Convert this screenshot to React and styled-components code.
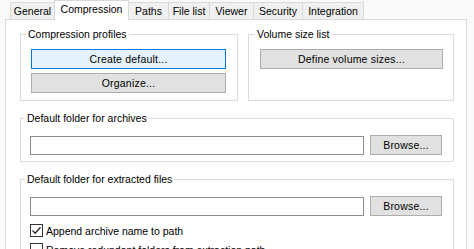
import React from "react";
import styled, { createGlobalStyle } from "styled-components";

const GlobalStyle = createGlobalStyle`
  body {
    margin: 0;
    background: #fafafa;
  }
`;

const Window = styled.div`
  width: 474px;
  height: 249px;
  padding-left: 5px;
  box-sizing: border-box;
  overflow: hidden;
  display: flex;
  flex-direction: column;
  font-family: "Liberation Sans", Arial, sans-serif;
  font-size: 10.5px;
  color: #000;
  background: #fafafa;
`;

const TabStrip = styled.div`
  display: flex;
  align-items: flex-start;
  height: 20px;
  padding-left: 5px;
`;

const Tab = styled.div`
  position: relative;
  z-index: ${(p) => (p.$active ? 2 : 1)};
  box-sizing: border-box;
  width: ${(p) => p.$w}px;
  height: ${(p) => (p.$active ? 20 : 18)}px;
  margin-top: ${(p) => (p.$active ? 0 : 2)}px;
  margin-left: ${(p) => (p.$first ? 0 : -1)}px;
  border: 1px solid #d9d9d9;
  border-bottom: ${(p) => (p.$active ? "none" : "1px solid #d9d9d9")};
  background: ${(p) => (p.$active ? "#fff" : "#f0f0f0")};
  display: flex;
  align-items: center;
  justify-content: center;
  padding-bottom: ${(p) => (p.$active ? 3 : 0)}px;
  white-space: nowrap;
`;

const Panel = styled.div`
  flex: 1;
  width: 462px;
  box-sizing: border-box;
  margin-top: -1px;
  border: 1px solid #d9d9d9;
  background: #fff;
  padding: 8px 0 0 14px;
  display: flex;
  flex-direction: column;
  gap: 11px;
`;

const GroupRow = styled.div`
  display: flex;
  gap: 10px;
`;

const Group = styled.fieldset`
  box-sizing: border-box;
  width: ${(p) => p.$w}px;
  margin: 0;
  min-width: 0;
  border: 1px solid #dcdcdc;
  padding: ${(p) => p.$pad};
  display: flex;
  flex-direction: column;
  gap: 4px;
`;

const Legend = styled.legend`
  margin-left: -5px;
  padding: 0 2px;
  line-height: 12px;
`;

const Button = styled.button`
  box-sizing: border-box;
  height: 20px;
  width: ${(p) => (p.$w ? `${p.$w}px` : "100%")};
  flex-shrink: 0;
  font: inherit;
  color: #000;
  letter-spacing: 0.2px;
  padding: 0;
  background: ${(p) => (p.$focused ? "#e5f1fb" : "#e1e1e1")};
  border: 1px solid ${(p) => (p.$focused ? "#0078d7" : "#adadad")};
  border-radius: 0;
`;

const FolderRow = styled.div`
  display: flex;
  align-items: center;
  gap: 6px;
`;

const PathInput = styled.input`
  flex: 1;
  box-sizing: border-box;
  height: 19px;
  margin: 0;
  border: 1px solid #8c8c8c;
  background: #fff;
  outline: none;
`;

const CheckRow = styled.label`
  display: flex;
  align-items: center;
  gap: 3px;
  height: 13px;
  margin-top: ${(p) => p.$mt}px;
  white-space: nowrap;
`;

const Box = styled.span`
  box-sizing: border-box;
  width: 13px;
  height: 13px;
  border: 1px solid #333;
  background: #fff;
  display: flex;
  align-items: center;
  justify-content: center;
`;

const Check = ({ checked, label, mt }) => (
  <CheckRow $mt={mt}>
    <Box>
      {checked && (
        <svg width="11" height="11" viewBox="0 0 11 11">
          <path d="M1.5 5.5 L4.2 8.2 L9.5 2.2" fill="none" stroke="#222" strokeWidth="1.3" />
        </svg>
      )}
    </Box>
    {label}
  </CheckRow>
);

const tabs = [
  { name: "General", w: 45 },
  { name: "Compression", w: 75, active: true },
  { name: "Paths", w: 41 },
  { name: "File list", w: 42 },
  { name: "Viewer", w: 45 },
  { name: "Security", w: 50 },
  { name: "Integration", w: 62 },
];

export default function App() {
  return (
    <>
      <GlobalStyle />
      <Window>
        <TabStrip>
          {tabs.map((t, i) => (
            <Tab key={t.name} $w={t.w} $active={t.active} $first={i === 0}>
              {t.name}
            </Tab>
          ))}
        </TabStrip>
        <Panel>
          <GroupRow>
            <Group $w={218} $pad="9px 11px 7px 10px">
              <Legend>Compression profiles</Legend>
              <Button $focused>Create default...</Button>
              <Button>Organize...</Button>
            </Group>
            <Group $w={206} $pad="9px 10px 7px 11px">
              <Legend>Volume size list</Legend>
              <Button>Define volume sizes...</Button>
            </Group>
          </GroupRow>
          <Group $w={434} $pad="11px 11px 6px 9px">
            <Legend>Default folder for archives</Legend>
            <FolderRow>
              <PathInput />
              <Button $w={72}>Browse...</Button>
            </FolderRow>
          </Group>
          <Group $w={434} $pad="11px 11px 5px 9px">
            <Legend>Default folder for extracted files</Legend>
            <FolderRow>
              <PathInput />
              <Button $w={72}>Browse...</Button>
            </FolderRow>
            <Check checked label="Append archive name to path" mt={4} />
            <Check label="Remove redundant folders from extraction path" mt={2} />
          </Group>
        </Panel>
      </Window>
    </>
  );
}
